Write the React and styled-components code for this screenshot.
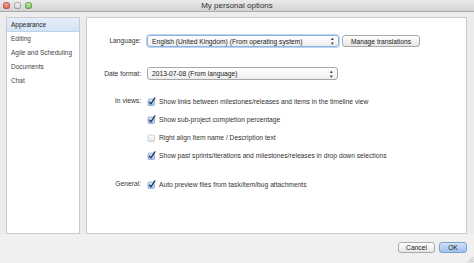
import React from "react";
import styled, { createGlobalStyle } from "styled-components";

const GlobalStyle = createGlobalStyle`
    html, body {
        margin: 0;
        padding: 0;
        background: #ececec;
    }
    body {
        font-family: "Liberation Sans", Arial, sans-serif;
        color: #222;
    }
`

const Window = styled.div`
    width: 474px;
    height: 263px;
    display: flex;
    flex-direction: column;
    background: #ececec;
    overflow: hidden;
    position: relative;
`

const TitleBar = styled.div`
    height: 12px;
    flex: none;
    display: flex;
    align-items: center;
    justify-content: center;
    position: relative;
    background: linear-gradient(#ebebeb, #d3d3d3);
    border-bottom: 1px solid #a9a9a9;
    box-sizing: border-box;
    font-size: 8px;
    color: #333;
`

const Lights = styled.div`
    position: absolute;
    left: 3px;
    top: 2px;
    display: flex;
    gap: 4px;
`

const Light = styled.span`
    width: 7px;
    height: 7px;
    border-radius: 50%;
    background: ${p => p.$color};
    box-shadow: inset 0 0 0 0.5px rgba(0,0,0,0.35);
`

const Main = styled.div`
    flex: 1;
    display: flex;
    gap: 6px;
    padding: 5px 7px 0 6px;
    min-height: 0;
`

const Sidebar = styled.div`
    width: 74px;
    height: 217px;
    box-sizing: border-box;
    background: #fff;
    border: 1px solid #cbcbcb;
    display: flex;
    flex-direction: column;
`

const NavItem = styled.div`
    height: 14px;
    line-height: 14px;
    padding-left: 4px;
    font-size: 6.5px;
    color: ${p => p.$active ? "#222" : "#444"};
    background: ${p => p.$active ? "linear-gradient(#e4eefa, #d3e3f5)" : "transparent"};
    border-bottom: 1px solid ${p => p.$active ? "#bcd3ec" : "transparent"};
    box-sizing: border-box;
`

const Content = styled.div`
    flex: 1;
    height: 217px;
    box-sizing: border-box;
    background: #fff;
    border: 1px solid #cbcbcb;
    padding: 17px 0 0 0;
    display: grid;
    grid-template-columns: 54px 1fr;
    column-gap: 6px;
    align-content: start;
    font-size: 6.7px;
`

const Label = styled.div`
    text-align: right;
    height: ${p => p.$h || 12}px;
    line-height: ${p => p.$h || 12}px;
    margin-top: ${p => p.$mt || 0}px;
    color: #333;
`

const Controls = styled.div`
    display: flex;
    flex-direction: column;
    gap: ${p => p.$gap || 0}px;
    margin-top: ${p => p.$mt || 0}px;
`

const Row = styled.div`
    display: flex;
    align-items: center;
    gap: 3px;
    height: ${p => p.$h || 12}px;
`

const Select = styled.div`
    width: ${p => p.$w}px;
    height: ${p => p.$h || 12}px;
    box-sizing: border-box;
    display: flex;
    align-items: center;
    justify-content: space-between;
    padding: 0 4px 0 4px;
    border: 1px solid ${p => p.$focus ? "#8fb3e0" : "#a6a6a6"};
    box-shadow: ${p => p.$focus ? "0 0 0 1px #b9d3f2" : "none"};
    border-radius: 3px;
    background: linear-gradient(#ffffff, #ededed);
    color: #222;
    font-size: 6.7px;
`

const Arrows = styled.span`
    font-size: 5px;
    line-height: 1;
    color: #333;
`

const Button = styled.div`
    height: ${p => p.$h || 12}px;
    width: ${p => p.$w}px;
    box-sizing: border-box;
    display: flex;
    align-items: center;
    justify-content: center;
    border: 1px solid ${p => p.$primary ? "#7e9fcf" : "#a9a9a9"};
    border-radius: 3px;
    background: ${p => p.$primary ? "linear-gradient(#cfe1f7, #9ec0ea)" : "linear-gradient(#ffffff, #e6e6e6)"};
    color: #222;
    font-size: 6.7px;
    white-space: nowrap;
`

const CheckText = styled.span`
    color: #333;
    white-space: nowrap;
`

const Footer = styled.div`
    height: 29px;
    flex: none;
    display: flex;
    align-items: center;
    justify-content: flex-end;
    gap: 4px;
    padding-right: 7px;
    padding-bottom: 2px;
    box-sizing: border-box;
    background: #f0f0f0;
`

const Grip = styled.svg`
    position: absolute;
    right: 0;
    bottom: 0;
`

const Check = ({ on }) => (
    <svg width="9" height="9" viewBox="0 0 9 9" style={{ flex: "none" }}>
        <defs>
            <linearGradient id={on ? "cbOn" : "cbOff"} x1="0" y1="0" x2="0" y2="1">
                <stop offset="0" stopColor={on ? "#dbe8f7" : "#ffffff"} />
                <stop offset="1" stopColor={on ? "#a9c6ea" : "#e4e4e4"} />
            </linearGradient>
        </defs>
        <rect x="1" y="2" width="6.5" height="6.5" rx="1.2"
            fill={`url(#${on ? "cbOn" : "cbOff"})`}
            stroke={on ? "#6f8fbf" : "#b5b5b5"} strokeWidth="0.6" />
        {on && (
            <path d="M2.4 5.1 L3.9 6.9 L7.9 0.9" fill="none" stroke="#1d3660"
                strokeWidth="1.3" strokeLinecap="round" strokeLinejoin="round" />
        )}
    </svg>
);

const CheckRow = ({ on, children }) => (
    <Row>
        <Check on={on} />
        <CheckText>{children}</CheckText>
    </Row>
);

const navItems = ["Appearance", "Editing", "Agile and Scheduling", "Documents", "Chat"];

const App = () => {
    return (
        <Window>
            <GlobalStyle />
            <TitleBar>
                <Lights>
                    <Light $color="radial-gradient(circle at 50% 35%, #f7a29a, #d9433a)" />
                    <Light $color="radial-gradient(circle at 50% 35%, #f2f2f2, #bdbdbd)" />
                    <Light $color="radial-gradient(circle at 50% 35%, #b8e6a0, #5cb345)" />
                </Lights>
                My personal options
            </TitleBar>
            <Main>
                <Sidebar>
                    {navItems.map((item, i) => (
                        <NavItem key={item} $active={i === 0}>{item}</NavItem>
                    ))}
                </Sidebar>
                <Content>
                    <Label>Language:</Label>
                    <Controls>
                        <Row $h={12}>
                            <Select $w={192} $focus>
                                <span>English (United Kingdom) (From operating system)</span>
                                <Arrows>▴<br />▾</Arrows>
                            </Select>
                            <Button $w={78}>Manage translations</Button>
                        </Row>
                    </Controls>

                    <Label $mt={20} $h={13}>Date format:</Label>
                    <Controls $mt={20}>
                        <Row $h={13}>
                            <Select $w={191} $h={13}>
                                <span>2013-07-08 (From language)</span>
                                <Arrows>▴<br />▾</Arrows>
                            </Select>
                        </Row>
                    </Controls>

                    <Label $mt={15}>In views:</Label>
                    <Controls $mt={15} $gap={6}>
                        <CheckRow on>Show links between milestones/releases and items in the timeline view</CheckRow>
                        <CheckRow on>Show sub-project completion percentage</CheckRow>
                        <CheckRow>Right align Item name / Description text</CheckRow>
                        <CheckRow on>Show past sprints/iterations and milestones/releases in drop down selections</CheckRow>
                    </Controls>

                    <Label $mt={17}>General:</Label>
                    <Controls $mt={17}>
                        <CheckRow on>Auto preview files from task/item/bug attachments</CheckRow>
                    </Controls>
                </Content>
            </Main>
            <Footer>
                <Button $w={37} $h={11}>Cancel</Button>
                <Button $w={28} $h={11} $primary>OK</Button>
            </Footer>
            <Grip width="8" height="8" viewBox="0 0 8 8">
                <path d="M7.5 2 L2 7.5 M7.5 4.5 L4.5 7.5 M7.5 6.5 L6.5 7.5" stroke="#999" strokeWidth="0.6" />
            </Grip>
        </Window>
    );
};

export default App;
